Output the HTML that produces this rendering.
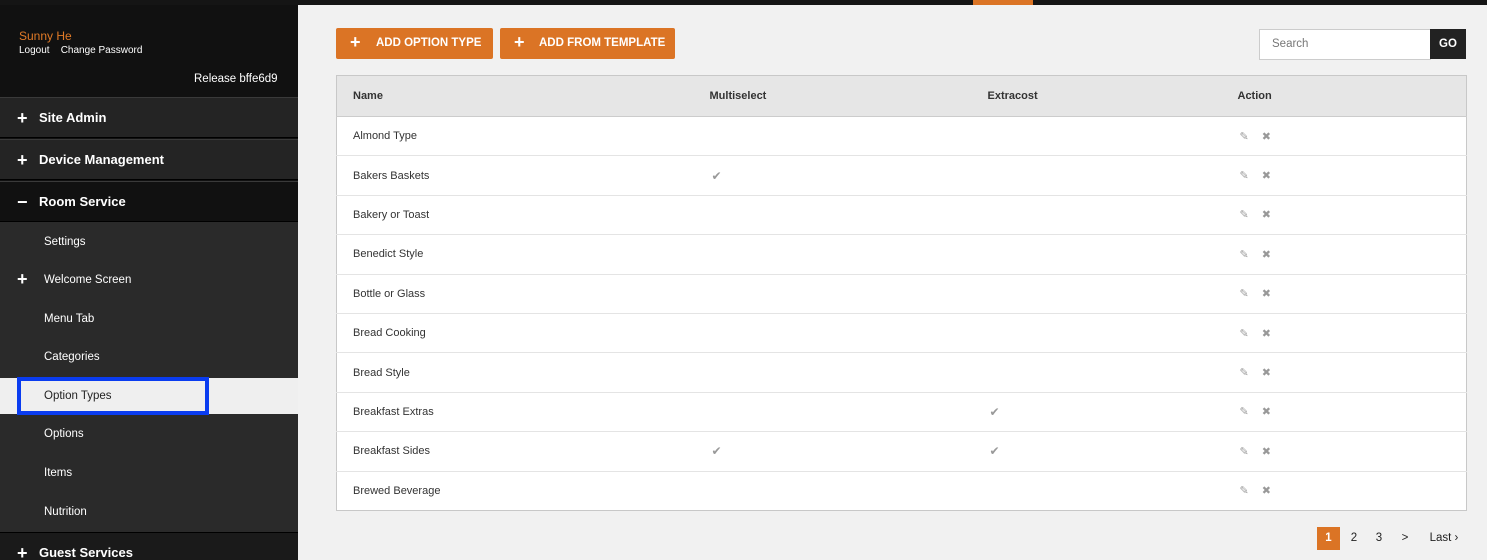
<!DOCTYPE html>
<html><head><style>
*{margin:0;padding:0;box-sizing:border-box}
html,body{width:1487px;height:560px;overflow:hidden}
body{background:#f1f1f1;font-family:"Liberation Sans",sans-serif;position:relative}
.top{position:absolute;left:0;top:0;width:1487px;height:5px;background:#151515}
.top i{position:absolute;left:973px;top:0;width:60px;height:5px;background:#db7425}
.side{position:absolute;left:0;top:5px;width:298px;height:555px;background:#111}
.ab{position:absolute;color:#fff}
.sec{position:absolute;left:0;width:298px;height:41px;background:#242424;border-top:1px solid #3a3a3a;border-bottom:1px solid #000;color:#fff;font-weight:bold;font-size:13px;line-height:40px;padding-left:39px}
.sec b{position:absolute;left:17px;top:0;font-size:18px}
.sub{position:absolute;left:0;width:298px;height:38.5px;color:#fff;font-size:11.5px;line-height:38px;padding-left:44px}
.btn{position:absolute;top:28px;height:31px;background:#db7425;color:#fff;font-weight:bold;font-size:11.5px;line-height:31px;border-radius:2px}
.btn span{font-size:18px;position:absolute;left:14px;top:-1px;font-weight:bold}
table{position:absolute;left:336px;top:75px;width:1131px;table-layout:fixed;border-collapse:collapse;background:#fff;border:1px solid #c8c8c8;font-size:11px;color:#333}
th{background:#e6e6e6;height:41px;text-align:left;font-weight:bold;font-size:11px;color:#333;border-bottom:1px solid #ccc}
td{height:39.4px;border-top:1px solid #e4e4e4}
th:first-child,td:first-child{padding-left:16px}
.ck{color:#999;font-size:12px;padding-left:2px}
.ac{color:#999;font-size:11px;padding-left:2px;word-spacing:10px}
.pg{position:absolute;top:527px;font-size:11.5px;color:#222;height:23px;line-height:23px;text-align:center}
</style></head><body>
<div class="top"><i></i></div>
<div class="side">
<div class="ab" style="left:19px;top:24px;color:#e07a27;font-size:12px">Sunny He</div>
<div class="ab" style="left:19px;top:40px;font-size:10px">Logout&nbsp;&nbsp;&nbsp;&nbsp;Change Password</div>
<div class="ab" style="left:194px;top:68px;font-size:11.5px">Release bffe6d9</div>
</div>
<div class="sec" style="top:97px"><b>+</b>Site Admin</div>
<div class="sec" style="top:139px"><b>+</b>Device Management</div>
<div class="sec" style="top:181px;background:#111"><b>−</b>Room Service</div>
<div style="position:absolute;left:0;top:222px;width:298px;height:311px;background:#2a2a2a"></div>
<div class="sub" style="top:223px">Settings</div>
<div class="sub" style="top:261px"><b style="position:absolute;left:17px;top:-1px;font-size:18px">+</b>Welcome Screen</div>
<div class="sub" style="top:300px">Menu Tab</div>
<div class="sub" style="top:338px">Categories</div>
<div style="position:absolute;left:0;top:378px;width:298px;height:36px;background:#efefef"></div>
<div style="position:absolute;left:17px;top:377px;width:192px;height:38px;border:4px solid #0a3cf0"></div>
<div class="sub" style="top:377px;color:#222">Option Types</div>
<div class="sub" style="top:415px">Options</div>
<div class="sub" style="top:454px">Items</div>
<div class="sub" style="top:493px">Nutrition</div>
<div class="sec" style="top:532px;height:28px;background:#1a1a1a;border-top:1px solid #000;border-bottom:none"><b>+</b>Guest Services</div>

<div class="btn" style="left:336px;width:157px;padding-left:40px"><span>+</span>ADD OPTION TYPE</div>
<div class="btn" style="left:500px;width:175px;padding-left:39px"><span>+</span>ADD FROM TEMPLATE</div>
<div style="position:absolute;left:1259px;top:29px;width:172px;height:31px;background:#fff;border:1px solid #ccc;font-size:11.5px;color:#777;line-height:29px;padding-left:12px">Search</div>
<div style="position:absolute;left:1430px;top:29px;width:36px;height:30px;background:#222;color:#fff;font-weight:bold;font-size:11.5px;line-height:30px;text-align:center">GO</div>

<table>
<tr><th style="width:373px">Name</th><th style="width:278px">Multiselect</th><th style="width:250px">Extracost</th><th>Action</th></tr>
<tr><td>Almond Type</td><td></td><td></td><td class="ac">✎ ✖</td></tr>
<tr><td>Bakers Baskets</td><td class="ck">✔</td><td></td><td class="ac">✎ ✖</td></tr>
<tr><td>Bakery or Toast</td><td></td><td></td><td class="ac">✎ ✖</td></tr>
<tr><td>Benedict Style</td><td></td><td></td><td class="ac">✎ ✖</td></tr>
<tr><td>Bottle or Glass</td><td></td><td></td><td class="ac">✎ ✖</td></tr>
<tr><td>Bread Cooking</td><td></td><td></td><td class="ac">✎ ✖</td></tr>
<tr><td>Bread Style</td><td></td><td></td><td class="ac">✎ ✖</td></tr>
<tr><td>Breakfast Extras</td><td></td><td class="ck">✔</td><td class="ac">✎ ✖</td></tr>
<tr><td>Breakfast Sides</td><td class="ck">✔</td><td class="ck">✔</td><td class="ac">✎ ✖</td></tr>
<tr><td>Brewed Beverage</td><td></td><td></td><td class="ac">✎ ✖</td></tr>
</table>

<div class="pg" style="left:1317px;width:23px;background:#db7425;color:#fff;font-weight:bold">1</div>
<div class="pg" style="left:1343px;width:22px">2</div>
<div class="pg" style="left:1368px;width:22px">3</div>
<div class="pg" style="left:1394px;width:22px">&gt;</div>
<div class="pg" style="left:1424px;width:40px">Last ›</div>
</body></html>
